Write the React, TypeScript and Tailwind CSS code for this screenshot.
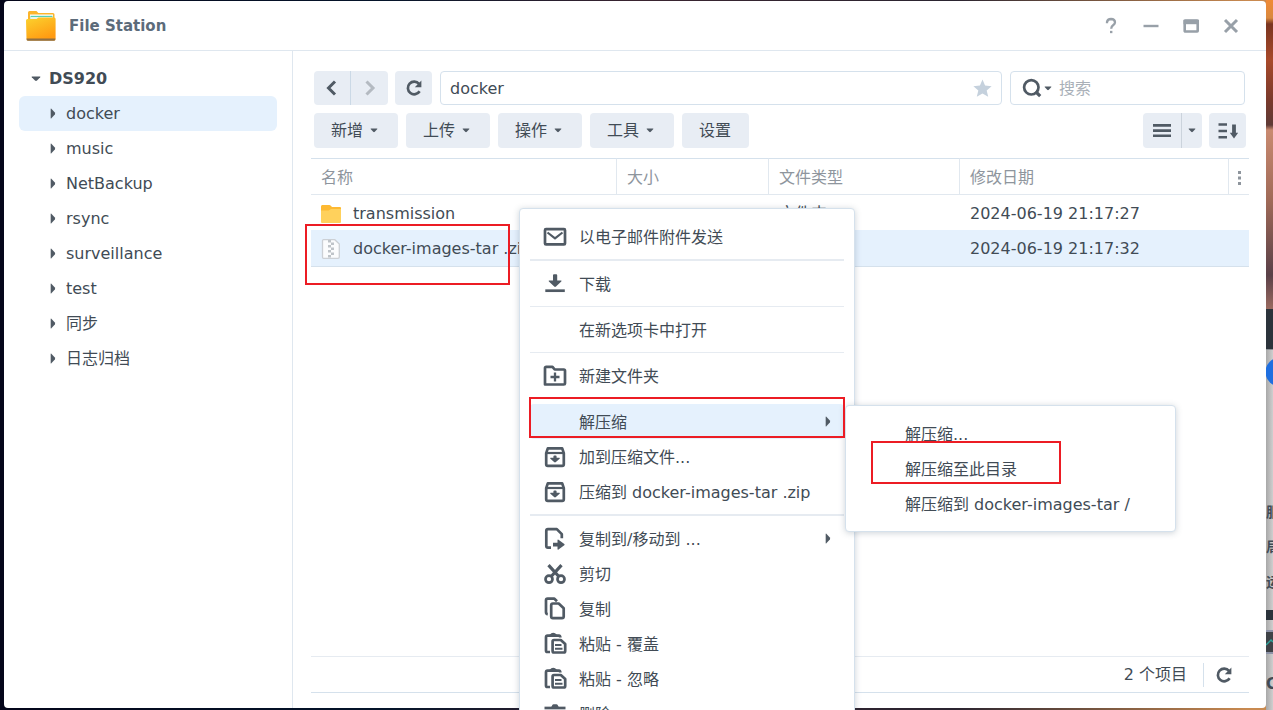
import React from "react";

const FONT = "font-['DejaVu_Sans','Noto_Sans_CJK_SC',sans-serif]";

type IconProps = { className?: string };

const CaretDown = ({ className = "h-[5px] w-[8px]" }: IconProps) => (
  <svg viewBox="0 0 10 6" className={`shrink-0 ${className}`} fill="#505a64" aria-hidden="true">
    <path d="M1 .6h8q.7 0 .2.6L6 4.6q-1 .9-2 0L.8 1.200Q.3.6 1 .6z" />
  </svg>
);

const CaretRight = () => (
  <svg viewBox="0 0 6 12" className="h-[11px] w-[6px] shrink-0" fill="#505a64" aria-hidden="true">
    <path d="M.5 1.200Q.5.2 1.200.8L5 5q.7 1 0 2L1.200 11.200Q.5 11.800.5 10.800z" />
  </svg>
);

const Refresh = () => (
  <svg viewBox="0 0 18 18" className="size-[18px] shrink-0" aria-hidden="true">
    <path d="M14.600 12.200A6.300 6.300 0 1 1 14 4.900" fill="none" stroke="#505a64" strokeWidth="2.700" />
    <path d="M16.400 1.400v6.800H9.800z" fill="#505a64" />
  </svg>
);

const MenuSvg = ({ children }: { children: React.ReactNode }) => (
  <svg
    viewBox="0 0 24 24"
    className="size-[24px] shrink-0"
    fill="none"
    stroke="#505a64"
    strokeWidth="2.700"
    strokeLinejoin="round"
    aria-hidden="true"
  >
    {children}
  </svg>
);

const MailIcon = () => (
  <MenuSvg>
    <rect x="2" y="4.200" width="20" height="15.200" rx="1" />
    <path d="M4.500 7.500l7.500 5.800 7.500-5.800" strokeWidth="2.200" />
  </MenuSvg>
);
const DownloadIcon = () => (
  <MenuSvg>
    <path d="M10 3.200q0-1 1-1h2.200q1 0 1 1V8.500h3.800q1 .2.300 1l-5.300 5q-1 .8-1.800 0l-5.300-5q-.7-.8.300-1H10z" fill="#505a64" stroke="none" />
    <path d="M2.300 18.700h19.500" />
  </MenuSvg>
);
const NewFolderIcon = () => (
  <MenuSvg>
    <path d="M2 20.500V4q0-1.200 1.200-1.200h6.300l2.200 2.700h9.100q1.200 0 1.200 1.200v12.800q0 1-1.200 1z" />
    <path d="M12 8.500v9M7.500 13h9" strokeWidth="2.300" />
  </MenuSvg>
);
const ArchiveIcon = () => (
  <MenuSvg>
    <path d="M3.200 8.200L4.800 3.300h14.400l1.600 4.900v11q0 1.600-1.600 1.600H4.800q-1.600 0-1.600-1.600z" />
    <path d="M3.200 8h17.600" strokeWidth="2.200" />
    <path d="M10.400 11.500q0-1 1-1h1.200q1 0 1 1v1.300h2.700q1 .2.300 1l-3.700 3.300q-.9.700-1.800 0l-3.700-3.300q-.7-.8.300-1h2.700z" fill="#505a64" stroke="none" />
  </MenuSvg>
);
const MoveIcon = () => (
  <MenuSvg>
    <path d="M8 20.700H5q-1.700 0-1.700-1.600V3.800q0-1.700 1.700-1.700h8.800l5 5v4.200" />
    <path d="M10 15.800h4.500v-2.600q.1-1.100 1-.5l5.800 4.300q.7.600 0 1.200L15.500 22.500q-.9.600-1-.5v-2.600H10z" fill="#505a64" stroke="none" />
  </MenuSvg>
);
const CutIcon = () => (
  <MenuSvg>
    <circle cx="6" cy="17.200" r="3.500" />
    <circle cx="18" cy="17.200" r="3.500" />
    <path d="M5.500 3.200L16.300 15M18.500 3.200L7.700 15" strokeWidth="3.200" />
  </MenuSvg>
);
const CopyIcon = () => (
  <MenuSvg>
    <path d="M4.800 17.200q-1.800-.2-1.800-2V3.300q0-1.600 1.600-1.600h6.800l2.600 2.500" />
    <path d="M8.200 8.300q0-1.800 1.700-1.800h5.800l5 4.700v8.300q0 1.700-1.700 1.700H9.900q-1.700 0-1.700-1.700z" />
  </MenuSvg>
);
const PasteIcon = () => (
  <MenuSvg>
    <path d="M7 20H4.600Q3 20 3 18.400V5.200q0-1.600 1.600-1.600h11.200q1.500.2 1.500 2" />
    <path d="M6 4.800V3.400q.2-.9 1-.9Q8 .7 10.200.7T13.500 2.500q.9 0 1 .9v1.400z" fill="#505a64" stroke="none" />
    <path d="M9.600 9.400Q9.600 8 11 8h6.800l4.400 4v7q0 1.500-1.500 1.500H11q-1.400 0-1.400-1.500z" />
    <path d="M12 13h6.500M12 16.800h7.500" strokeWidth="2" />
  </MenuSvg>
);
const TrashIcon = () => (
  <MenuSvg>
    <path d="M1.500 6h21" />
    <path d="M8 5.500l1.500-2.700q.3-.6 1-.6h3q.7 0 1 .6L16 5.500z" fill="#505a64" stroke="none" />
    <path d="M5 8l1 13h12l1-13" />
  </MenuSvg>
);

const AppFolder = () => (
  <svg viewBox="0 0 32 32" className="size-[32px] shrink-0" aria-hidden="true">
    <defs>
      <linearGradient id="folderFront" x1="0" y1="0" x2=".5" y2="1">
        <stop offset="0" stopColor="#fbd22e" />
        <stop offset="1" stopColor="#ff9b12" />
      </linearGradient>
    </defs>
    <path d="M3 2.500Q3 1 4.500 1h7l1.800 2H28q1.500 0 1.500 1.500V12H3z" fill="#fbb52c" />
    <path d="M5 4.500h23v7H5z" fill="#fff" />
    <path d="M5.500 5.800h22V10h-22z" fill="#55cfb3" />
    <path d="M5.500 7h22v3h-22z" fill="#e9f3ea" />
    <path d="M1 10.500Q1 9 2.500 9h9l2-1.500h15.700q1.400 0 1.400 1.500v20q0 1.500-1.500 1.500h-26Q1.500 30.500 1.500 29z" fill="url(#folderFront)" />
    <path d="M1.600 28.500h28.700v.8q0 1.500-1.500 1.500h-25.700q-1.500 0-1.500-1.500z" fill="#8f6f43" />
  </svg>
);

const SmallFolder = () => (
  <svg viewBox="0 0 20 18" className="h-[18px] w-[20px] shrink-0" aria-hidden="true">
    <path d="M0 1.500Q0 0 1.200 0h7q1 0 1.600.8L11 2h8q1 0 1 1v4H0z" fill="#fdb932" />
    <path d="M0 5.500h7.500L10 4h10v13q0 1-1 1H1q-1 0-1-1z" fill="#ffd15c" />
  </svg>
);

const ZipFile = () => (
  <svg viewBox="0 0 20 20" className="h-[20px] w-[20px] shrink-0" aria-hidden="true">
    <path d="M2.500.7h11.300L18.300 5v13q0 1.300-1.300 1.300H2.500q-1 0-1-1.300V2q0-1.300 1-1.300z" fill="#fbfcfd" stroke="#ccd0d5" strokeWidth="1.300" />
    <path d="M7 1h3v2.500H7zM10 3.500h3V6h-3zM7 6h3v2.500H7zM10 8.500h3V11h-3zM7 11h3v2.500H7zM10 13.500h3V16h-3zM7 16h3v2.500H7z" fill="#bfc4c9" />
  </svg>
);

const folders = ["docker", "music", "NetBackup", "rsync", "surveillance", "test", "同步", "日志归档"];

const WindowButton = ({ label, children }: { label: string; children: React.ReactNode }) => (
  <button type="button" aria-label={label} className="flex size-[24px] items-center justify-center">
    <svg viewBox="0 0 18 18" className="size-[18px]" fill="none" stroke="#98a0a8" aria-hidden="true">
      {children}
    </svg>
  </button>
);

const ToolButton = ({ label, caret = true }: { label: string; caret?: boolean }) => (
  <button
    type="button"
    className={`flex h-[35px] items-center gap-[7px] rounded bg-[#e8edf4] pl-[17px] whitespace-nowrap ${caret ? "pr-5" : "pr-[18px]"}`}
  >
    <span>{label}</span>
    {caret && <CaretDown />}
  </button>
);

const MenuItem = ({
  icon,
  label,
  sub = false,
  active = false,
}: {
  icon?: React.ReactNode;
  label: string;
  sub?: boolean;
  active?: boolean;
}) => (
  <li role="none">
    <button
      type="button"
      role="menuitem"
      className={`flex h-[35px] w-full items-center rounded px-[13px] text-left whitespace-pre ${active ? "bg-[#e5f1fd]" : ""}`}
    >
      <span className="mr-3 flex size-[24px] shrink-0 items-center">{icon}</span>
      <span className="flex-1 pt-[2px]">{label}</span>
      {sub && <CaretRight />}
    </button>
  </li>
);

const Thin = () => <li role="separator" className="my-[5px] h-px bg-[#e6ebf1]" />;
const Thick = () => <li role="separator" className="my-[5px] h-[2px] bg-[#e6ebf1]" />;

const Titlebar = () => (
  <header className="flex h-[50px] shrink-0 items-center border-b border-[#dfe7ef] pr-[23px] pl-[21px]">
    <AppFolder />
    <h1 className="ml-3 flex-1 pt-[2px] text-[15px] font-bold text-[#5c6b7a]">File Station</h1>
    <div className="flex gap-4">
      <WindowButton label="帮助">
        <path d="M5 6.200V5q.5-3 4-3 3.900.2 4 3.200 0 1.500-1.700 2.800Q9.200 9.500 9.200 11.800" strokeWidth="2.300" />
        <path d="M8 15h2.400" strokeWidth="2.300" />
      </WindowButton>
      <WindowButton label="最小化">
        <path d="M1.500 9h15" strokeWidth="2.400" />
      </WindowButton>
      <WindowButton label="最大化">
        <rect x="2.700" y="3.500" width="13" height="11" rx=".5" strokeWidth="2.600" />
        <path d="M1.500 5h15.500" strokeWidth="4.400" />
      </WindowButton>
      <WindowButton label="关闭">
        <path d="M3 3l12 12M15 3L3 15" strokeWidth="3" />
      </WindowButton>
    </div>
  </header>
);

const Sidebar = () => (
  <nav className="w-[289px] shrink-0 border-r border-[#dfe7ef] px-[15px] pt-[10px]">
    <a href="#root" className="flex h-[35px] items-center gap-2 pl-3 font-bold">
      <CaretDown className="h-[6px] w-[10px]" />
      DS920
    </a>
    <ul>
      {folders.map((name) => (
        <li key={name}>
          <a
            href={`#${name}`}
            className={`flex h-[35px] items-center gap-[10px] rounded-md pl-[31px] ${name === "docker" ? "bg-[#e5f1fd]" : ""}`}
          >
            <CaretRight />
            {name}
          </a>
        </li>
      ))}
    </ul>
  </nav>
);

const Toolbars = () => (
  <div className="flex flex-col gap-2 pr-[17px] pl-[3px]">
    <div className="flex h-[34px] gap-2 pr-px">
      <div className="flex gap-[7px]">
        <div className="flex overflow-hidden rounded bg-[#e8edf4]">
          <button type="button" aria-label="后退" className="flex w-[37px] items-center justify-center border-r border-[#cbd9e6]">
            <svg viewBox="0 0 12 16" className="h-[16px] w-[12px]" fill="none" stroke="#505a64" strokeWidth="3">
              <path d="M9 1.500L2.500 8 9 14.500" />
            </svg>
          </button>
          <button type="button" aria-label="前进" className="flex w-[37px] items-center justify-center">
            <svg viewBox="0 0 12 16" className="h-[16px] w-[12px]" fill="none" stroke="#b4bac1" strokeWidth="3">
              <path d="M2.500 1.500L9 8l-6.500 6.500" />
            </svg>
          </button>
        </div>
        <button type="button" aria-label="刷新" className="flex w-[37px] items-center justify-center rounded bg-[#e8edf4]">
          <Refresh />
        </button>
      </div>
      <div className="flex flex-1 items-center rounded border border-[#d5e1ec] px-[9px]">
        <input aria-label="路径" defaultValue="docker" className="h-full min-w-0 flex-1 bg-transparent outline-none" />
        <svg viewBox="0 0 20 20" className="size-[19px]" fill="#c5d1dd" aria-hidden="true">
          <path d="M10 .5l2.700 6.400 6.900.6-5.200 4.500 1.600 6.800L10 15.200l-6 3.600L5.600 12 .4 7.500l6.900-.6z" />
        </svg>
      </div>
      <div className="flex w-[235px] items-center rounded border border-[#d5e1ec] pr-2 pl-[11px]">
        <button type="button" aria-label="搜索选项" className="flex shrink-0 items-center gap-[2px]">
          <svg viewBox="0 0 20 20" className="size-[20px]" fill="none" stroke="#505a64" aria-hidden="true">
            <circle cx="9.300" cy="9.300" r="7.200" strokeWidth="2.700" />
            <path d="M13.500 13.500l4.700 4.700" strokeWidth="3.200" />
          </svg>
          <CaretDown />
        </button>
        <input
          aria-label="搜索"
          placeholder="搜索"
          className="ml-[7px] h-full min-w-0 flex-1 bg-transparent outline-none placeholder:text-[#a9b0b8]"
        />
      </div>
    </div>
    <div className="flex gap-2">
      <ToolButton label="新增" />
      <ToolButton label="上传" />
      <ToolButton label="操作" />
      <ToolButton label="工具" />
      <ToolButton label="设置" caret={false} />
      <div className="ml-auto flex h-[35px] gap-[7px]">
        <div className="flex overflow-hidden rounded bg-[#e8edf4]">
          <button type="button" aria-label="列表视图" className="flex w-[39px] items-center justify-center border-r border-[#cbd3dc]">
            <svg viewBox="0 0 18 14" className="h-[14px] w-[18px]" stroke="#505a64" strokeWidth="2.600" aria-hidden="true">
              <path d="M0 1.400h18M0 6.600h18M0 11.800h18" />
            </svg>
          </button>
          <button type="button" aria-label="视图选项" className="flex w-[20px] items-center justify-center">
            <CaretDown />
          </button>
        </div>
        <button type="button" aria-label="排序" className="flex w-[37px] items-center justify-center rounded bg-[#e8edf4]">
          <svg viewBox="0 0 20 18" className="h-[18px] w-[20px]" stroke="#505a64" fill="none" aria-hidden="true">
            <path d="M.5 2.500h8.500M.5 9h8.500M.5 15.200h8.500" strokeWidth="2.600" />
            <path d="M16 2.500v10" strokeWidth="3.800" />
            <path d="M11.800 10.800h8.400L16 16.500z" fill="#505a64" stroke="none" />
          </svg>
        </button>
      </div>
    </div>
  </div>
);

const th = "border-r border-[#e1e8ef] px-[10px] text-left font-normal";

const FileTable = () => (
  <table className="mt-[10px] w-full table-fixed border-separate border-spacing-0">
    <colgroup>
      <col className="w-[306px]" />
      <col className="w-[152px]" />
      <col className="w-[191px]" />
      <col />
      <col className="w-[20px]" />
    </colgroup>
    <thead className="text-[#8e959d] [&_th]:border-b [&_th]:border-t [&_th]:border-b-[#e1e8ef] [&_th]:border-t-[#d5e1ec] [&_th]:pt-[2px]">
      <tr className="h-[37px]">
        <th className={th}>名称</th>
        <th className={th}>大小</th>
        <th className={th}>文件类型</th>
        <th className={th}>修改日期</th>
        <th>
          <button type="button" aria-label="列选项" className="flex w-full justify-center">
            <svg viewBox="0 0 3 14" className="h-[14px] w-[3px]" fill="#8e959d" aria-hidden="true">
              <path d="M0 0h3v3H0zM0 5.500h3v3H0zM0 11h3v3H0z" />
            </svg>
          </button>
        </th>
      </tr>
    </thead>
    <tbody className="[&_td]:px-[10px] [&_td]:pt-[2px] [&_td]:pb-0">
      <tr className="h-[35px]">
        <td>
          <div className="flex items-center gap-3">
            <SmallFolder />
            transmission
          </div>
        </td>
        <td />
        <td>文件夹</td>
        <td>2024-06-19 21:17:27</td>
        <td />
      </tr>
      <tr className="h-[37px] bg-[#e5f1fd] [&_td]:border-b [&_td]:border-[#d5e1ec]">
        <td>
          <div className="flex items-center gap-3 whitespace-nowrap">
            <ZipFile />
            docker-images-tar .zip
          </div>
        </td>
        <td />
        <td />
        <td>2024-06-19 21:17:32</td>
        <td />
      </tr>
    </tbody>
  </table>
);

const ContextMenu = () => (
  <ul
    role="menu"
    className="absolute top-[208px] left-[519px] w-[336px] rounded border border-[#d5e1ec] bg-white p-[10px] shadow-[0_1px_6px_rgba(60,80,100,0.25)]"
  >
    <MenuItem icon={<MailIcon />} label="以电子邮件附件发送" />
    <Thick />
    <MenuItem icon={<DownloadIcon />} label="下载" />
    <Thin />
    <MenuItem label="在新选项卡中打开" />
    <Thin />
    <MenuItem icon={<NewFolderIcon />} label="新建文件夹" />
    <Thin />
    <MenuItem label="解压缩" sub active />
    <MenuItem icon={<ArchiveIcon />} label="加到压缩文件..." />
    <MenuItem icon={<ArchiveIcon />} label="压缩到 docker-images-tar .zip" />
    <Thick />
    <MenuItem icon={<MoveIcon />} label="复制到/移动到 ..." sub />
    <MenuItem icon={<CutIcon />} label="剪切" />
    <MenuItem icon={<CopyIcon />} label="复制" />
    <MenuItem icon={<PasteIcon />} label="粘贴 - 覆盖" />
    <MenuItem icon={<PasteIcon />} label="粘贴 - 忽略" />
    <MenuItem icon={<TrashIcon />} label="删除" />
  </ul>
);

const SubMenu = () => (
  <ul
    role="menu"
    className="absolute top-[405px] left-[845px] w-[331px] rounded border border-[#d5e1ec] bg-white p-[10px] shadow-[0_1px_6px_rgba(60,80,100,0.25)]"
  >
    <MenuItem label="解压缩..." />
    <MenuItem label="解压缩至此目录" />
    <MenuItem label="解压缩到 docker-images-tar /" />
  </ul>
);

const DesktopEdge = () => (
  <aside className="flex w-[7px] shrink-0 flex-col overflow-hidden bg-gradient-to-r from-[#a8a8a8] to-[#cfcfcf] font-bold">
    <div className="h-[309px] shrink-0 bg-[linear-gradient(#f08a35_0,#d9893f_18px,#7a3520_24px,#a8492a_60px,#7a3a2c_100px,#5f3a36_125px,#c98a70_130px,#a06a58_200px,#5a4048_275px,#9a6a60_309px)]" />
    <div className="h-[41px] shrink-0 border-b border-[#8a8f94] bg-[#2b333b]" />
    <div className="h-[145px] shrink-0 pt-[7px]">
      <svg viewBox="0 0 7 30" className="h-[30px] w-[7px]" aria-hidden="true">
        <circle cx="14" cy="15" r="14.500" fill="#1f6fe0" />
      </svg>
    </div>
    <div className="h-[115px] shrink-0 text-[14px] leading-[35px]">
      <p className="w-4">服</p>
      <p className="w-4">局</p>
      <p className="w-4">运</p>
    </div>
    <div className="h-[10px] shrink-0 bg-[#2b333b]" />
    <div className="mt-[10px] flex h-[24px] shrink-0 items-center border-y-2 border-[#8d93a8] bg-[#3f4247]">
      <svg viewBox="0 0 7 10" className="h-[10px] w-[7px]" fill="none" stroke="#2fa39b" strokeWidth="1.500" aria-hidden="true">
        <path d="M0 8l5-5 2 2" />
      </svg>
    </div>
    <p className="mt-5 w-4 text-[15px] leading-[20px]">C</p>
  </aside>
);

export default function App() {
  return (
    <div
      className={`relative flex h-screen overflow-hidden bg-[linear-gradient(90deg,#04061a_0,#04142a_30%,#3a2430_50%,#2a2430_75%,#c98a50_98%)] pl-1 text-[16px] text-[#414b55] ${FONT}`}
    >
      <div className="flex min-w-0 flex-1 flex-col pt-px pb-[2px]">
        <div className="flex min-h-0 flex-1 flex-col rounded bg-white">
          <Titlebar />
          <div className="flex min-h-0 flex-1">
            <Sidebar />
            <main className="flex min-w-0 flex-1 flex-col pt-5 pr-[17px] pb-[15px] pl-[18px]">
              <div className="-mr-[14px]">
                <Toolbars />
              </div>
              <FileTable />
              <footer className="mt-auto flex h-[37px] items-center justify-end border-t border-b border-t-[#e6ebf1] border-b-[#d5e1ec] pr-4">
                <span>2 个项目</span>
                <span className="mr-[11px] ml-4 h-6 w-px bg-[#d5e1ec]" />
                <button type="button" aria-label="刷新列表">
                  <Refresh />
                </button>
              </footer>
            </main>
          </div>
        </div>
      </div>
      <DesktopEdge />
      <ContextMenu />
      <SubMenu />
      <div className="pointer-events-none absolute top-[224px] left-[305px] h-[61px] w-[205px] border-2 border-[#ec1c24]" />
      <div className="pointer-events-none absolute top-[397px] left-[529px] h-[41px] w-[316px] border-2 border-[#ec1c24]" />
      <div className="pointer-events-none absolute top-[441px] left-[871px] h-[43px] w-[190px] border-2 border-[#ec1c24]" />
    </div>
  );
}
